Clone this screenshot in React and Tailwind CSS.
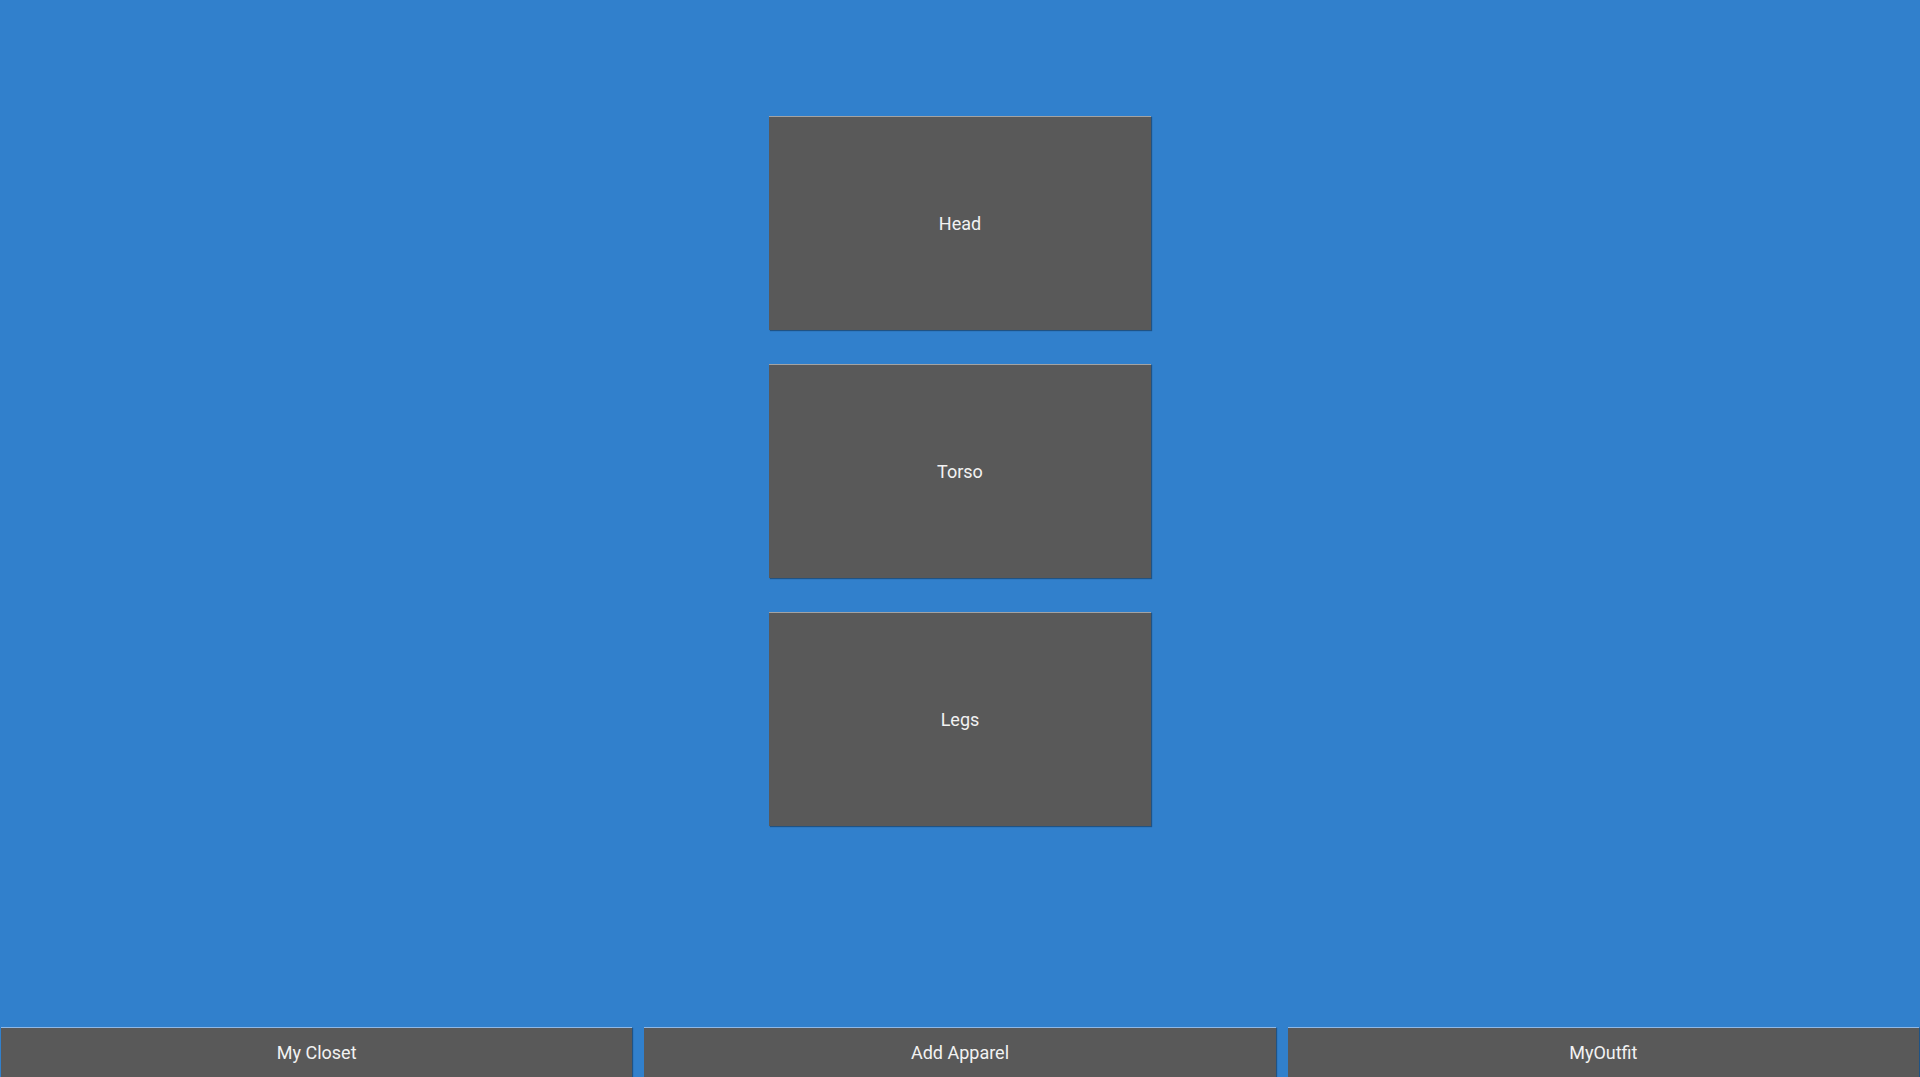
import React from 'react'

const PARTS = ['Head', 'Torso', 'Legs']
const TABS = ['My Closet', 'Add Apparel', 'MyOutfit']

export default function App() {
  return (
    <div className="h-screen w-full bg-[#3180cc] flex flex-col justify-between font-['Roboto',sans-serif] text-[#f2f2f2]">
      {/* body slots */}
      <div className="flex flex-col items-center gap-[34px] pt-[116px]">
        {PARTS.map(p => (
          <button
            key={p}
            className="w-[382px] h-[214px] bg-[#595959] border-t border-[#a3a3a3] shadow-[1px_1px_1px_rgba(0,0,0,0.35)] text-[18px] flex items-center justify-center"
          >
            {p}
          </button>
        ))}
      </div>

      {/* bottom nav */}
      <div className="grid grid-cols-3 gap-3 px-[1px] h-[50px]">
        {TABS.map(t => (
          <button
            key={t}
            className="bg-[#595959] border-t border-[#8fb8e6] shadow-[1px_1px_1px_rgba(0,0,0,0.35)] text-[18px] flex items-center justify-center"
          >
            {t}
          </button>
        ))}
      </div>
    </div>
  )
}
